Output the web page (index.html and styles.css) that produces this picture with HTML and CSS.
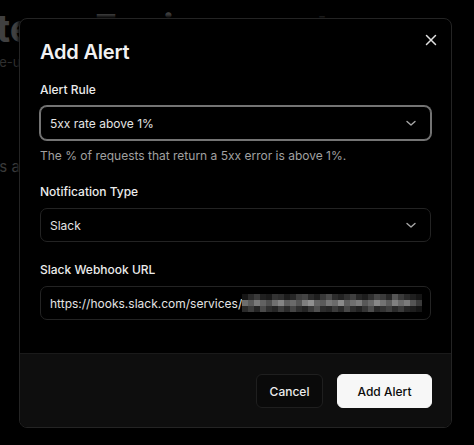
FILE: index.html
```html
<!DOCTYPE html>
<html lang="en">
<head>
<meta charset="utf-8">
<title>Add Alert</title>
<link rel="stylesheet" href="styles.css">
</head>
<body>
  <main class="page">
    <h1 class="page-title"><span>Private</span><span>Environments</span></h1>
    <p class="page-sub">Wake-up calls for every environment.</p>
    <p class="page-desc">Alerts are sent when a rule is triggered.</p>
  </main>

  <div class="modal" role="dialog" aria-labelledby="dlg-title">
    <button class="close" aria-label="Close">
      <svg width="16" height="16" viewBox="0 0 16 16" fill="none" stroke="currentColor" stroke-width="1.5" stroke-linecap="round"><path d="M3.5 3.5l9 9M12.5 3.5l-9 9"/></svg>
    </button>
    <div class="modal-body">
      <h2 id="dlg-title" class="modal-title">Add Alert</h2>

      <div class="fields">
        <div class="field">
          <label class="label">Alert Rule</label>
          <div class="select focused">
            <span>5xx rate above 1%</span>
            <svg class="chev" width="16" height="16" viewBox="0 0 16 16" fill="none" stroke="currentColor" stroke-width="1.4" stroke-linecap="round" stroke-linejoin="round"><path d="M4 6.5l4 3.5 4-3.5"/></svg>
          </div>
          <p class="help">The % of requests that return a 5xx error is above 1%.</p>
        </div>

        <div class="field">
          <label class="label">Notification Type</label>
          <div class="select">
            <span>Slack</span>
            <svg class="chev" width="16" height="16" viewBox="0 0 16 16" fill="none" stroke="currentColor" stroke-width="1.4" stroke-linecap="round" stroke-linejoin="round"><path d="M4 6.5l4 3.5 4-3.5"/></svg>
          </div>
        </div>

        <div class="field">
          <label class="label">Slack Webhook URL</label>
          <div class="input">
            <span>https://hooks.slack.com/services/</span><span class="mosaic" aria-hidden="true"></span>
          </div>
        </div>
      </div>
    </div>

    <div class="modal-footer">
      <button class="btn btn-secondary">Cancel</button>
      <button class="btn btn-primary">Add Alert</button>
    </div>
  </div>
</body>
</html>
```

FILE: styles.css
```css
* { box-sizing: border-box; }

html, body {
  margin: 0;
  height: 100%;
  background: #000;
  overflow: hidden;
}

body {
  font-family: Inter, "Noto Sans", "Liberation Sans", sans-serif;
  color: #ededed;
  position: relative;
}

/* background page (dimmed, behind the dialog) */
.page {
  margin-left: -99px;
  padding-top: 8px;
}

.page-title {
  display: flex;
  gap: 62px;
  margin: 0;
  font-size: 38px;
  line-height: 40px;
  font-weight: 700;
  color: #404040;
  white-space: nowrap;
}

.page-sub {
  margin: 5px 0 0 72px;
  font-size: 13px;
  line-height: 18px;
  color: #2f2f2f;
  white-space: nowrap;
}

.page-desc {
  margin: 87px 0 0 65px;
  font-size: 15px;
  line-height: 18px;
  color: #3a3a3a;
  white-space: nowrap;
}

/* dialog */
.modal {
  position: absolute;
  left: 19px;
  top: 18px;
  width: 433px;
  height: 410px;
  background: #000;
  border: 1px solid #242424;
  border-radius: 8px;
  box-shadow: 0 -1px 3px 1px rgba(0, 0, 0, 0.95);
  display: flex;
  flex-direction: column;
  overflow: hidden;
}

.close {
  position: absolute;
  top: 13px;
  right: 12px;
  width: 16px;
  height: 16px;
  padding: 0;
  border: 0;
  background: transparent;
  color: #e0e0e0;
  display: flex;
}

.modal-body {
  flex: 1;
  padding: 19px 20px 0 20px;
}

.modal-title {
  margin: 0;
  font-size: 20px;
  line-height: 28px;
  font-weight: 600;
  color: #f2f2f2;
  letter-spacing: -0.2px;
}

.fields {
  margin-top: 16px;
  display: flex;
  flex-direction: column;
  gap: 20px;
}

.field {
  display: flex;
  flex-direction: column;
}

.label {
  font-size: 12px;
  line-height: 16px;
  font-weight: 500;
  color: #ececec;
  margin-bottom: 8px;
}

.select,
.input {
  height: 34px;
  border: 1px solid #232323;
  border-radius: 7px;
  background: #000;
  display: flex;
  align-items: center;
  padding: 0 11px 0 9px;
  font-size: 12px;
  color: #e4e4e4;
  white-space: nowrap;
  overflow: hidden;
}

.select {
  justify-content: space-between;
}

.select.focused {
  border-color: #747474;
  box-shadow: 0 0 0 1px #747474;
}

.chev {
  color: #a6a6a6;
  flex: none;
}

.help {
  margin: 8px 0 0;
  font-size: 12px;
  line-height: 16px;
  color: #a1a1a1;
}

.mosaic {
  display: inline-block;
  width: 180px;
  height: 18px;
  flex: none;
  background-image:
    linear-gradient(90deg, #151515 0 6px, #2a2a2a 6px 12px, #3a3a3a 12px 18px, #202020 18px 24px, #1a1a1a 24px 30px, #333 30px 36px, #2d2d2d 36px 42px, #1c1c1c 42px 48px, #262626 48px 54px, #3d3d3d 54px 60px, #444 60px 66px, #2a2a2a 66px 72px, #1e1e1e 72px 78px, #383838 78px 84px, #4a4a4a 84px 90px, #2c2c2c 90px 96px, #222 96px 102px, #303030 102px 108px, #3f3f3f 108px 114px, #262626 114px 120px, #1d1d1d 120px 126px, #2f2f2f 126px 132px, #454545 132px 138px, #3a3a3a 138px 144px, #262626 144px 150px, #555 150px 156px, #3a3a3a 156px 162px, #2a2a2a 162px 168px, #1f1f1f 168px 174px, #151515 174px 180px),
    linear-gradient(90deg, #6d6d6d 0 6px, #5a5a5a 6px 12px, #7a7a7a 12px 18px, #626262 18px 24px, #4f4f4f 24px 30px, #707070 30px 36px, #858585 36px 42px, #5f5f5f 42px 48px, #6a6a6a 48px 54px, #555 54px 60px, #7e7e7e 60px 66px, #909090 66px 72px, #646464 72px 78px, #5a5a5a 78px 84px, #777 84px 90px, #6b6b6b 90px 96px, #8a8a8a 96px 102px, #5e5e5e 102px 108px, #6f6f6f 108px 114px, #7c7c7c 114px 120px, #585858 120px 126px, #696969 126px 132px, #888 132px 138px, #737373 138px 144px, #5c5c5c 144px 150px, #808080 150px 156px, #6a6a6a 156px 162px, #7a7a7a 162px 168px, #555 168px 174px, #3a3a3a 174px 180px),
    linear-gradient(90deg, #2a2a2a 0 6px, #3c3c3c 6px 12px, #252525 12px 18px, #4a4a4a 18px 24px, #303030 24px 30px, #262626 30px 36px, #3e3e3e 36px 42px, #2b2b2b 42px 48px, #454545 48px 54px, #2f2f2f 54px 60px, #242424 60px 66px, #3a3a3a 66px 72px, #505050 72px 78px, #2c2c2c 78px 84px, #262626 84px 90px, #3b3b3b 90px 96px, #2a2a2a 96px 102px, #484848 102px 108px, #2e2e2e 108px 114px, #222 114px 120px, #353535 120px 126px, #4d4d4d 126px 132px, #292929 132px 138px, #333 138px 144px, #404040 144px 150px, #2b2b2b 150px 156px, #3a3a3a 156px 162px, #242424 162px 168px, #1e1e1e 168px 174px, #151515 174px 180px);
  background-size: 180px 6px, 180px 6px, 180px 6px;
  background-position: 0 0, 0 6px, 0 12px;
  background-repeat: no-repeat;
}

.modal-footer {
  background: #0e0e0e;
  border-top: 1px solid #1a1a1a;
  padding: 20px 19px 19px 20px;
  display: flex;
  justify-content: flex-end;
  gap: 14px;
}

.btn {
  height: 34px;
  border-radius: 6px;
  font-family: inherit;
  font-size: 12px;
  font-weight: 500;
  padding: 0;
  cursor: pointer;
}

.btn-secondary {
  width: 67px;
  background: #0a0a0a;
  color: #ededed;
  border: 1px solid #1f1f1f;
}

.btn-primary {
  width: 95px;
  background: #f7f7f7;
  color: #0a0a0a;
  border: 1px solid #f7f7f7;
}
```
